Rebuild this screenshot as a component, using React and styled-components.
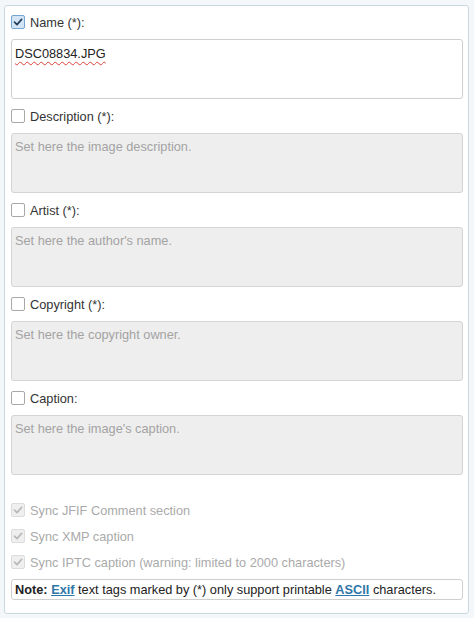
import React from 'react';
import styled, { createGlobalStyle } from 'styled-components';

const GlobalStyle = createGlobalStyle`
  html, body {
    margin: 0;
    padding: 0;
    background: #f4f7f9;
  }
  body {
    font-family: "Liberation Sans", Arial, sans-serif;
    font-size: 12.75px;
    color: #333;
  }
  * { box-sizing: border-box; }
`;

const Page = styled.div`
  padding: 5px 5px 0 4px;
`;

const Panel = styled.div`
  background: #fff;
  border: 1px solid #cad9df;
  border-radius: 3px;
  padding: 0 5px 13px 6px;
`;

const Field = styled.div`
  display: flex;
  flex-direction: column;
`;

const Label = styled.label`
  display: flex;
  align-items: center;
  gap: 5px;
  height: 24px;
  margin: 5px 0;
  color: ${p => (p.disabled ? '#aaa' : '#333')};
  ${Field}:first-child & {
    margin-top: 4px;
  }
`;

const SyncLabel = styled(Label)`
  height: 26px;
  margin: 0;
`;

const SyncList = styled.div`
  display: flex;
  flex-direction: column;
  margin-top: 22px;
`;

const Box = styled.span`
  display: inline-flex;
  align-items: center;
  justify-content: center;
  width: 14px;
  height: 14px;
  flex: none;
  border-radius: 2px;
  border: 1px solid ${p => (p.disabled ? '#dcdcdc' : p.checked ? '#76a5cf' : '#a8a8a8')};
  background: ${p => (p.disabled ? '#efefef' : p.checked ? '#d3e5f4' : '#fff')};
  color: ${p => (p.disabled ? '#b9b9b9' : '#23405c')};
`;

const Area = styled.textarea`
  display: block;
  width: 100%;
  height: 60px;
  margin: 0;
  padding: 5px 3px;
  resize: none;
  font: inherit;
  line-height: 16px;
  border: 1px solid #d4d4d4;
  border-radius: 3px;
  background: #eeeeee;
  color: #333;
  &::placeholder {
    color: #a3a3a3;
  }
`;

const FilledBox = styled.div`
  height: 60px;
  padding: 6px 3px;
  border: 1px solid #cfcfcf;
  border-radius: 3px;
  background: #fff;
  color: #222;
  line-height: 16px;
`;

const Misspelled = styled.span`
  text-decoration: underline wavy #e04040;
  text-decoration-thickness: 1px;
  text-underline-offset: 3px;
`;

const Note = styled.div`
  display: flex;
  align-items: center;
  height: 21px;
  margin-top: 4px;
  padding: 0 3px;
  border: 1px solid #cfcfcf;
  border-radius: 3px;
  color: #222;
  white-space: nowrap;
  b { color: #222; }
`;

const Link = styled.a`
  color: #2f77a8;
  font-weight: bold;
  text-decoration: underline;
`;

const Check = ({ checked, disabled }) => (
  <Box checked={checked} disabled={disabled}>
    {checked && (
      <svg width="10" height="10" viewBox="0 0 10 10">
        <path d="M1.5 5.2 L4 7.6 L8.6 2.4" fill="none" stroke="currentColor" strokeWidth="1.7" strokeLinecap="round" strokeLinejoin="round" />
      </svg>
    )}
  </Box>
);

const fields = [
  { label: 'Description (*):', placeholder: 'Set here the image description.' },
  { label: 'Artist (*):', placeholder: "Set here the author's name." },
  { label: 'Copyright (*):', placeholder: 'Set here the copyright owner.' },
  { label: 'Caption:', placeholder: "Set here the image's caption." },
];

const syncs = [
  'Sync JFIF Comment section',
  'Sync XMP caption',
  'Sync IPTC caption (warning: limited to 2000 characters)',
];

export default function App() {
  return (
    <Page>
      <GlobalStyle />
      <Panel>
        <Field>
          <Label>
            <Check checked />
            Name (*):
          </Label>
          <FilledBox>
            <Misspelled>DSC08834.JPG</Misspelled>
          </FilledBox>
        </Field>
        {fields.map(f => (
          <Field key={f.label}>
            <Label>
              <Check />
              {f.label}
            </Label>
            <Area disabled placeholder={f.placeholder} />
          </Field>
        ))}
        <SyncList>
          {syncs.map(s => (
            <SyncLabel key={s} disabled>
              <Check checked disabled />
              {s}
            </SyncLabel>
          ))}
        </SyncList>
        <Note>
          <b>Note:</b>&nbsp;<Link href="#">Exif</Link>&nbsp;text tags marked by (*) only support printable&nbsp;
          <Link href="#">ASCII</Link>&nbsp;characters.
        </Note>
      </Panel>
    </Page>
  );
}
